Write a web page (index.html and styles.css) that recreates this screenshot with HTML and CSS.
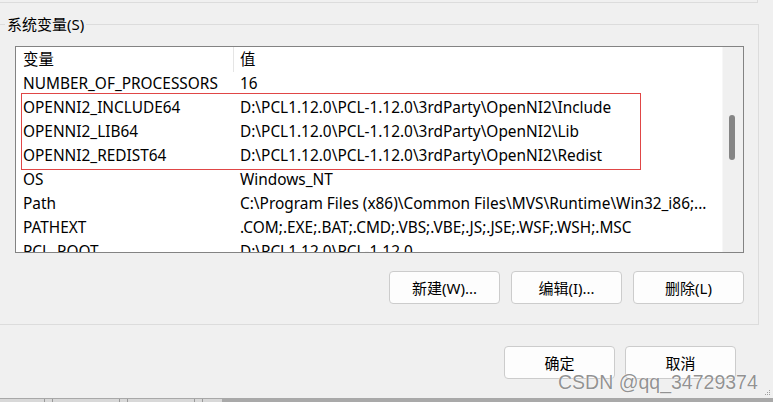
FILE: index.html
```html
<!DOCTYPE html>
<html lang="zh-CN">
<head>
  <meta charset="UTF-8" />
  <title>环境变量</title>
  <link rel="stylesheet" href="styles.css">
</head>
<body>
  <div class="dialog">
    <div class="prev-group"></div>

    <div class="group">
      <div class="group-label">系统变量(S)</div>

      <div class="list-box">
        <div class="list-body">
          <div class="row header">
            <div class="cell name">变量</div>
            <div class="cell value">值</div>
          </div>
          <div class="row">
            <div class="cell name">NUMBER_OF_PROCESSORS</div>
            <div class="cell value">16</div>
          </div>
          <div class="row">
            <div class="cell name">OPENNI2_INCLUDE64</div>
            <div class="cell value">D:\PCL1.12.0\PCL-1.12.0\3rdParty\OpenNI2\Include</div>
          </div>
          <div class="row">
            <div class="cell name">OPENNI2_LIB64</div>
            <div class="cell value">D:\PCL1.12.0\PCL-1.12.0\3rdParty\OpenNI2\Lib</div>
          </div>
          <div class="row">
            <div class="cell name">OPENNI2_REDIST64</div>
            <div class="cell value">D:\PCL1.12.0\PCL-1.12.0\3rdParty\OpenNI2\Redist</div>
          </div>
          <div class="row">
            <div class="cell name">OS</div>
            <div class="cell value">Windows_NT</div>
          </div>
          <div class="row">
            <div class="cell name">Path</div>
            <div class="cell value">C:\Program Files (x86)\Common Files\MVS\Runtime\Win32_i86;...</div>
          </div>
          <div class="row">
            <div class="cell name">PATHEXT</div>
            <div class="cell value">.COM;.EXE;.BAT;.CMD;.VBS;.VBE;.JS;.JSE;.WSF;.WSH;.MSC</div>
          </div>
          <div class="row">
            <div class="cell name">PCL_ROOT</div>
            <div class="cell value">D:\PCL1.12.0\PCL-1.12.0</div>
          </div>
          <div class="highlight"></div>
        </div>
        <div class="scrollbar">
          <div class="thumb"></div>
        </div>
      </div>

      <div class="button-row">
        <button class="btn">新建(W)...</button>
        <button class="btn">编辑(I)...</button>
        <button class="btn">删除(L)</button>
      </div>
    </div>

    <div class="dialog-buttons">
      <button class="btn">确定</button>
      <button class="btn">取消</button>
    </div>

    <div class="watermark">CSDN @qq_34729374</div>
    <svg class="grip" width="7" height="7" viewBox="0 0 7 7">
      <rect x="5" y="1" width="1" height="1" fill="#a0a0a0"/>
      <rect x="3" y="3" width="1" height="1" fill="#a0a0a0"/>
      <rect x="5" y="3" width="1" height="1" fill="#a0a0a0"/>
      <rect x="1" y="5" width="1" height="1" fill="#a0a0a0"/>
      <rect x="3" y="5" width="1" height="1" fill="#a0a0a0"/>
      <rect x="5" y="5" width="1" height="1" fill="#a0a0a0"/>
    </svg>
  </div>

  <div class="taskbar">
    <span class="seg"></span><span class="seg"></span><span class="seg"></span>
  </div>
</body>
</html>
```

FILE: styles.css
```css
body {
  margin: 0;
  width: 773px;
  height: 402px;
  overflow: hidden;
  background: #f0f0f0;
  font-family: 'Noto Sans', 'Noto Sans CJK SC', sans-serif;
  font-size: 15px;
  color: #000;
}
.dialog {
  position: relative;
  height: 399px;
  border-bottom: 1px solid #a8a8a8;
  box-sizing: border-box;
}
.prev-group {
  width: 759px;
  height: 3px;
  margin-left: -1px;
  border-right: 1px solid #dcdcdc;
  border-bottom: 1px solid #dcdcdc;
  box-sizing: border-box;
}
.group {
  width: 761px;
  margin-left: -2px;
  margin-top: 21px;
  border: 1px solid #dcdcdc;
  box-sizing: border-box;
  padding: 0 15px 20px 16px;
}
.group-label {
  width: fit-content;
  margin-top: -11px;
  margin-left: -10px;
  height: 20px;
  line-height: 20px;
  padding: 0 2px;
  background: #f0f0f0;
}
.list-box {
  display: flex;
  width: 729px;
  height: 207px;
  margin-top: 12px;
  border: 1px solid #838383;
  box-sizing: border-box;
  background: #fff;
  overflow: hidden;
  font-size: 15.4px;
}
.list-body {
  position: relative;
  width: 706px;
  overflow: hidden;
}
.row {
  display: flex;
  height: 24px;
  line-height: 24px;
  white-space: nowrap;
}
.row.header {
  height: 25px;
  line-height: 25px;
}
.cell.name {
  width: 210px;
  padding-left: 7px;
  flex: none;
}
.cell.value {
  padding-left: 7px;
}
.row.header .cell.name {
  border-right: 1px solid #e5e5e5;
}
.row.header .cell.value {
  padding-left: 6px;
}
.highlight {
  position: absolute;
  left: 5px;
  top: 46px;
  width: 620px;
  height: 77px;
  border: 1px solid #e04646;
  box-sizing: border-box;
}
.scrollbar {
  width: 21px;
  flex: none;
  background: #f0f0f0;
  border-left: 1px solid #f7f7f7;
  padding-top: 68px;
  box-sizing: border-box;
}
.thumb {
  width: 6px;
  height: 45px;
  margin-left: 6px;
  background: #858585;
  border-radius: 3px;
}
.button-row {
  display: flex;
  justify-content: flex-end;
  gap: 11px;
  width: 729px;
  margin-top: 18px;
}
.btn {
  width: 111px;
  height: 33px;
  padding: 0;
  border: 1px solid #cccccc;
  border-radius: 4px;
  background: #fdfdfd;
  font-family: 'Noto Sans', 'Noto Sans CJK SC', sans-serif;
  font-size: 15px;
  color: #000;
}
.dialog-buttons {
  display: flex;
  justify-content: flex-end;
  gap: 10px;
  margin-top: 21px;
  margin-right: 37px;
}
.watermark {
  position: absolute;
  left: 558px;
  top: 371px;
  font-family: 'Liberation Sans', Arial, sans-serif;
  font-size: 19.5px;
  color: rgba(110, 110, 110, 0.75);
  text-shadow: 0 0 1px #fff, 0 0 1px #fff;
}
.grip {
  position: absolute;
  right: 2px;
  bottom: 2px;
}
.taskbar {
  display: flex;
  height: 3px;
  background: linear-gradient(to right, #d8d8d8 222px, #a9a9a9 222px);
}
.seg {
  width: 7px;
  margin-left: 44px;
  border-left: 1px solid #9a9a9a;
  border-right: 1px solid #9a9a9a;
}
.seg + .seg {
  margin-left: 66px;
}
```
